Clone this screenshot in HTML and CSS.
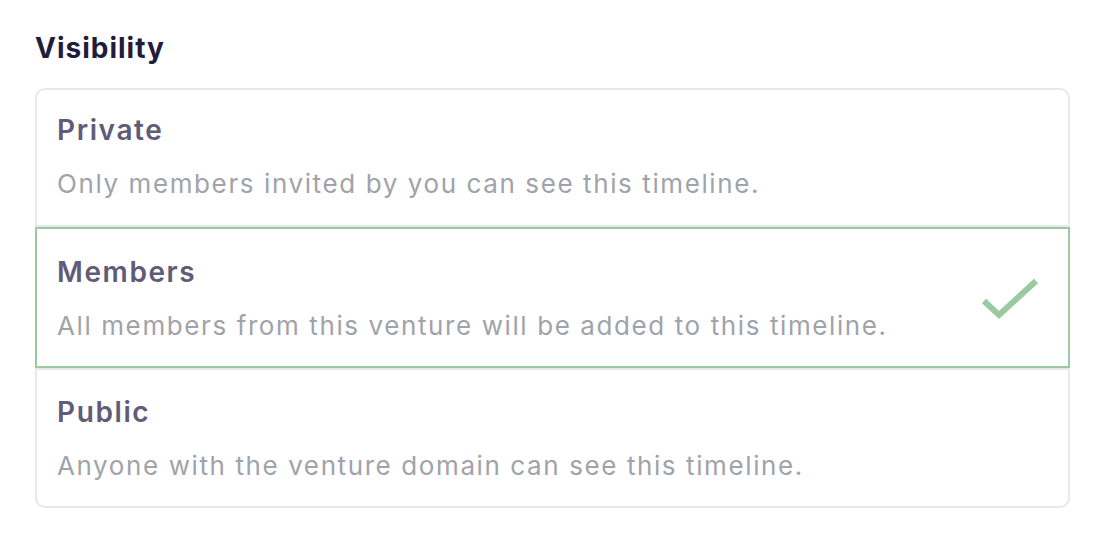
FILE: index.html
```html
<!DOCTYPE html>
<html lang="en">
<head>
<meta charset="UTF-8">
<title>Timeline visibility</title>
<link rel="stylesheet" href="styles.css">
</head>
<body>
    <div class="field">
        <h2 class="field-label">Visibility</h2>

        <div class="options">
            <div class="option first">
                <div class="option-text">
                    <div class="option-title">Private</div>
                    <div class="option-desc">Only members invited by you can see this timeline.</div>
                </div>
            </div>
            <div class="option selected">
                <div class="option-text">
                    <div class="option-title">Members</div>
                    <div class="option-desc">All members from this venture will be added to this timeline.</div>
                </div>
                <!-- check mark -->
                <svg class="check" width="58" height="44" viewBox="0 0 58 44">
                    <polyline points="3,24 18,38 55,4" fill="none" stroke="#9bc9a1" stroke-width="6"/>
                </svg>
            </div>
            <div class="option last">
                <div class="option-text">
                    <div class="option-title">Public</div>
                    <div class="option-desc">Anyone with the venture domain can see this timeline.</div>
                </div>
            </div>
        </div>
    </div>
</body>
</html>
```

FILE: styles.css
```css
body {
    margin: 0;
    background-color: #fff;
    font-family: Inter, "Noto Sans", sans-serif;
}

.field {
    padding: 28px 26px 0 35px;
}

.field-label {
    margin: 0 0 20px 0;
    font-size: 28px;
    line-height: 40px;
    font-weight: 700;
    letter-spacing: 1px;
    color: #211c3c;
}

/* option list */
.options {
    border: 2px solid #e8e8e8;
    border-radius: 10px;
}

.option {
    display: flex;
    align-items: center;
    justify-content: space-between;
    padding: 22px 20px 22px 20px;
}

.option.first {
    border-bottom: 2px solid #e8e8e8;
    padding-bottom: 23px;
}

.option.last {
    border-top: 2px solid #e8e8e8;
    padding-top: 24px;
    padding-bottom: 22px;
}

.option.selected {
    margin: 0 -2px;
    padding: 25px 29px 22px 20px;
    border: 2px solid #9bc9a1;
}

.option-title {
    font-size: 28px;
    line-height: 36px;
    font-weight: 600;
    letter-spacing: 1.6px;
    color: #615b78;
}

.option-desc {
    margin-top: 18px;
    font-size: 26px;
    line-height: 36px;
    letter-spacing: 1.6px;
    color: #a0a3a9;
}

.check {
    display: block;
}
```
